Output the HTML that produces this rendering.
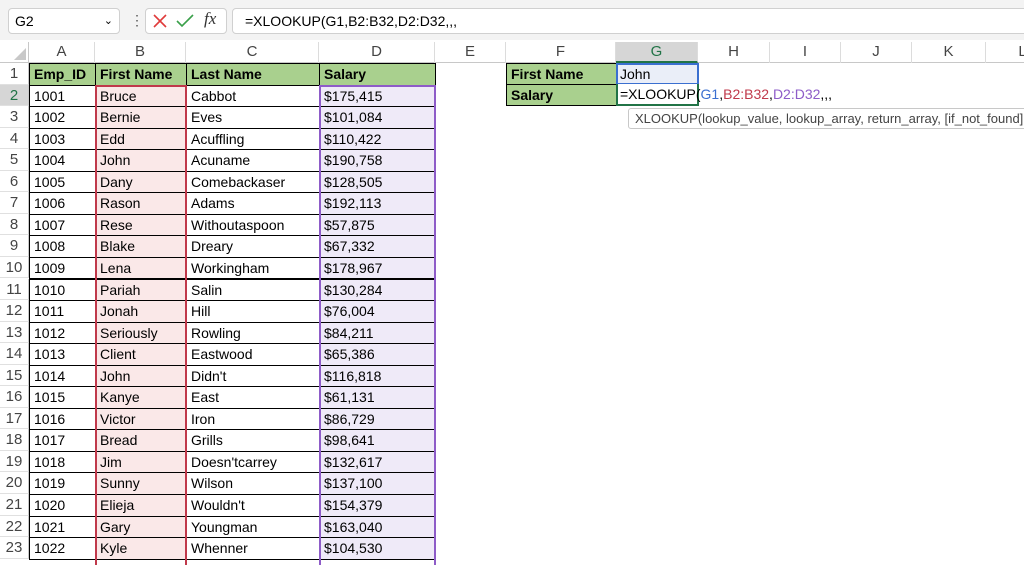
<!DOCTYPE html>
<html><head><meta charset="utf-8"><style>
body{margin:0;width:1024px;height:558px;overflow:hidden;background:#fff;font-family:"Liberation Sans",Arial,sans-serif;position:relative}
.a{position:absolute;box-sizing:border-box}
.t{font-size:14px;line-height:20px;white-space:nowrap;padding-left:4px;color:#000}
.h{font-size:15px;color:#444;text-align:center;line-height:20px}
</style></head><body>
<div class="a" style="left:0;top:0;width:1024px;height:40px;background:#f3f3f3"></div>
<div class="a" style="left:8px;top:8px;width:112px;height:26px;background:#fff;border:1px solid #d0d0d0;border-radius:4px;font-size:14px;line-height:24px;padding-left:6px">G2<span style="position:absolute;right:6px;top:0;font-size:11px">&#8964;</span></div>
<div class="a" style="left:130px;top:12px;width:4px;height:16px;font-size:14px;line-height:16px;color:#555">&#8942;</div>
<div class="a" style="left:145px;top:8px;width:82px;height:26px;background:#fff;border:1px solid #d0d0d0;border-radius:4px"></div>
<svg class="a" style="left:152px;top:13px" width="16" height="16"><path d="M2 2L14 14M14 2L2 14" stroke="#e03b3b" stroke-width="1.6"/></svg>
<svg class="a" style="left:176px;top:13px" width="18" height="16"><path d="M1 8L6 13L17 2" stroke="#3aa04a" stroke-width="1.6" fill="none"/></svg>
<div class="a" style="left:204px;top:9px;font-family:'Liberation Serif',serif;font-style:italic;font-size:17px;color:#333">fx</div>
<div class="a" style="left:232px;top:8px;width:800px;height:26px;background:#fff;border:1px solid #d0d0d0;border-radius:4px;font-size:14px;line-height:24px;padding-left:12px">=XLOOKUP(G1,B2:B32,D2:D32,,,</div>
<div id="g"></div>
<script>
var cols=[29,95,186,319,435,506,616,698,770,841,912,986,1060];
var L="ABCDEFGHIJKL";var s="";
function d(x,y,w,h,st,c){s+='<div class="a" style="left:'+x+'px;top:'+y+'px;width:'+w+'px;height:'+h+'px;'+st+'">'+(c||'')+'</div>';}
d(0,42,1024,21,"background:#fff;border-bottom:1px solid #c8c8c8");
d(0,42,29,21,"border-right:1px solid #c8c8c8",'<svg width="29" height="20"><path d="M26 6L26 18L14 18Z" fill="#c8c8c8"/></svg>');
for(var i=0;i<12;i++){var x=cols[i],w=cols[i+1]-x;var sel=i==6;
d(x,42,w,21,"border-right:1px solid #dcdcdc;"+(sel?"background:#d6d6d6;border-bottom:2px solid #217346;":""),'<div class="h"'+(sel?' style="color:#217346"':'')+'>'+L[i]+'</div>');}
var data=[["Emp_ID","First Name","Last Name","Salary"],["1001","Bruce","Cabbot","$175,415"],["1002","Bernie","Eves","$101,084"],["1003","Edd","Acuffling","$110,422"],["1004","John","Acuname","$190,758"],["1005","Dany","Comebackaser","$128,505"],["1006","Rason","Adams","$192,113"],["1007","Rese","Withoutaspoon","$57,875"],["1008","Blake","Dreary","$67,332"],["1009","Lena","Workingham","$178,967"],["1010","Pariah","Salin","$130,284"],["1011","Jonah","Hill","$76,004"],["1012","Seriously","Rowling","$84,211"],["1013","Client","Eastwood","$65,386"],["1014","John","Didn't","$116,818"],["1015","Kanye","East","$61,131"],["1016","Victor","Iron","$86,729"],["1017","Bread","Grills","$98,641"],["1018","Jim","Doesn'tcarrey","$132,617"],["1019","Sunny","Wilson","$137,100"],["1020","Elieja","Wouldn't","$154,379"],["1021","Gary","Youngman","$163,040"],["1022","Kyle","Whenner","$104,530"]];
var rh=21.55;
for(var r=0;r<23;r++){var y=63+r*rh;
d(0,y,29,rh,"border-right:1px solid #c8c8c8;border-bottom:1px solid #e0e0e0;"+(r==1?"background:#d6d6d6;":""),'<div class="h" style="line-height:21px;'+(r==1?'color:#217346':'')+'">'+(r+1)+'</div>');
for(var c=0;c<4;c++){var x=cols[c],w=cols[c+1]-x;var bg=r==0?"#a9d08e":(c==1?"#fae8e8":(c==3?"#efeaf8":"#fff"));
d(x,y,w+1,rh+1,"background:"+bg+";border:1px solid #000",'<div class="t" style="'+(r==0?'font-weight:bold':'')+'">'+data[r][c]+'</div>');}}
d(95,84.5,92,480,"border-left:2px solid #c0394b;border-right:2px solid #c0394b;border-top:2px solid #c0394b");
d(319,84.5,117,480,"border-left:2px solid #8e5cc8;border-right:2px solid #8e5cc8;border-top:2px solid #8e5cc8");
d(506,63,111,22,"background:#a9d08e;border:1px solid #000",'<div class="t" style="font-weight:bold">First Name</div>');
d(506,84,111,22,"background:#a9d08e;border:1px solid #000",'<div class="t" style="font-weight:bold">Salary</div>');
d(616,63,83,22,"background:#eaeef8;border:2px solid #3a6fd0",'<div class="t" style="line-height:18px;padding-left:2px">John</div>');
d(616,84,83,22,"border:2px solid #217346;border-top:none;background:#fff");
d(618,84,300,21,"z-index:5",'<div class="t" style="line-height:21px;padding-left:2px">=XLOOKUP(<span style="color:#3a6fd0">G1</span>,<span style="color:#c0394b">B2:B32</span>,<span style="color:#8e5cc8">D2:D32</span>,,,</div>');
d(628,108,400,21,"background:#fff;border:1px solid #c8c8c8;border-radius:3px;font-size:13px;line-height:19px;padding-left:6px;color:#444;white-space:nowrap",'XLOOKUP(lookup_value, lookup_array, return_array, [if_not_found]');
document.getElementById('g').innerHTML=s;
</script>
</body></html>
